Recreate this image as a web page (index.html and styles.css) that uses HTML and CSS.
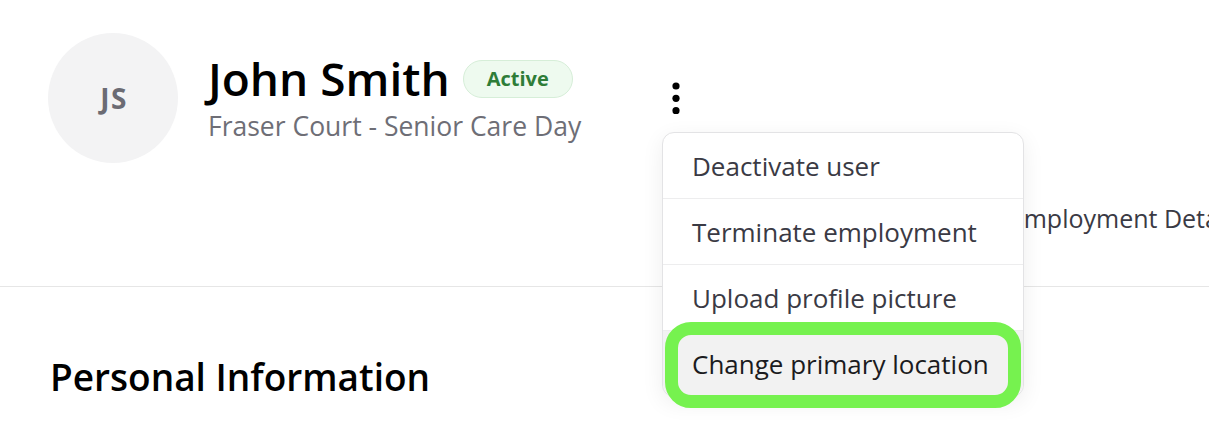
FILE: index.html
```html
<!DOCTYPE html>
<html lang="en">
<head>
<meta charset="utf-8">
<title>John Smith</title>
<link rel="stylesheet" href="styles.css">
</head>
<body>
<header class="header">
  <div class="top">
    <div class="avatar">JS</div>
    <div class="info">
      <div class="name-row">
        <h1 class="name">John Smith</h1>
        <span class="badge">Active</span>
      </div>
      <div class="subtitle">Fraser Court - Senior Care Day</div>
    </div>
    <div class="kebab-wrap">
      <button class="kebab" aria-label="More actions">
        <svg width="16" height="32" viewBox="0 0 16 32"><circle cx="8" cy="4" r="3.6" fill="#000"/><circle cx="8" cy="16.3" r="3.6" fill="#000"/><circle cx="8" cy="28.7" r="3.6" fill="#000"/></svg>
      </button>
      <ul class="menu">
        <li class="menu-item">Deactivate user</li>
        <li class="menu-item">Terminate employment</li>
        <li class="menu-item">Upload profile picture</li>
        <li class="menu-item active">Change primary location<span class="ring"></span></li>
      </ul>
    </div>
  </div>
  <nav class="tabs">
    <span class="tab">Personal Details</span>
    <span class="tab">Employment Details</span>
  </nav>
</header>
<main class="content">
  <h2 class="section-title">Personal Information</h2>
</main>
</body>
</html>
```

FILE: styles.css
```css
* { box-sizing: border-box; }
html, body { margin: 0; padding: 0; background: #fff; min-height: 100%; }
html { height: 100%; }
body { font-family: "Open Sans", "Lato", sans-serif; color: #000; overflow-x: hidden; }

.header {
  height: 287px;
  padding-top: 33px;
  border-bottom: 1px solid #e6e6e6;
}
.top {
  display: flex;
  align-items: flex-start;
  padding-left: 48px;
}
.avatar {
  width: 130px;
  height: 130px;
  border-radius: 50%;
  background: #f3f3f4;
  color: #6b6b73;
  font-weight: 700;
  font-size: 28px;
  letter-spacing: 1.5px;
  padding-left: 2px;
  display: flex;
  align-items: center;
  justify-content: center;
  flex-shrink: 0;
}
.info {
  margin-left: 30px;
  width: 460px;
  padding-top: 20px;
}
.name-row {
  display: flex;
  align-items: center;
  gap: 13px;
  height: 50px;
}
.name {
  margin: 0;
  font-size: 46px;
  font-weight: 600;
  line-height: 50px;
}
.badge {
  height: 38px;
  padding: 0 23px;
  border-radius: 19px;
  border: 1px solid #d6eed8;
  background: #eefaef;
  color: #2e7d38;
  font-weight: 700;
  font-size: 20px;
  line-height: 36px;
  margin-top: 2px;
}
.subtitle {
  margin-top: 7px;
  font-size: 26.5px;
  line-height: 32px;
  color: #6e6e76;
}

.kebab-wrap {
  position: relative;
  margin-top: 49px;
}
.kebab {
  display: block;
  width: 16px;
  height: 32px;
  padding: 0;
  border: 0;
  background: none;
}
.kebab svg { display: block; }

.menu {
  position: absolute;
  left: -6px;
  top: 50px;
  width: 362px;
  margin: 0;
  padding: 0;
  list-style: none;
  background: #fff;
  border: 1px solid #e3e3e5;
  border-radius: 12px;
  box-shadow: 0 6px 22px rgba(0, 0, 0, 0.07);
  z-index: 5;
}
.menu-item {
  position: relative;
  height: 66px;
  padding-left: 29px;
  display: flex;
  align-items: center;
  font-size: 26px;
  color: #3a3a44;
  border-top: 1px solid #ededee;
  white-space: nowrap;
}
.menu-item:first-child { border-top: 0; height: 65px; border-radius: 12px 12px 0 0; }
.menu-item.active {
  background: #f2f2f2;
  color: #1b1b20;
  border-radius: 0 0 12px 12px;
}
.ring {
  position: absolute;
  left: 2px;
  right: 2px;
  top: -9px;
  bottom: -12px;
  border: 13px solid #76f24f;
  border-radius: 26px;
}

.tabs {
  display: flex;
  gap: 40px;
  margin-top: 40px;
  padding-left: 782px;
}
.tab {
  font-size: 25px;
  color: #3a3a44;
  line-height: 30px;
  white-space: nowrap;
}

.content { padding: 68px 50px 0; }
.section-title {
  margin: 0;
  font-size: 37px;
  font-weight: 600;
  line-height: 44px;
}
```
